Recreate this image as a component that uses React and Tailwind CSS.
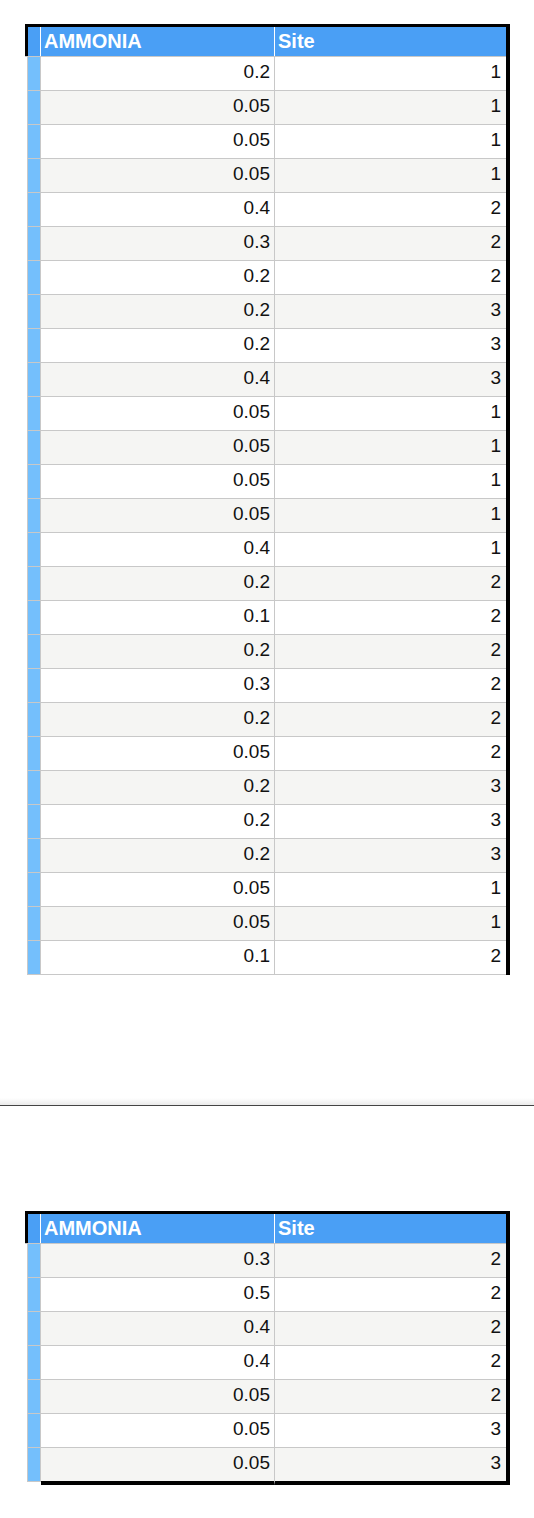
import React from "react";

const t1 = [
  ["0.2", "1"], ["0.05", "1"], ["0.05", "1"], ["0.05", "1"], ["0.4", "2"],
  ["0.3", "2"], ["0.2", "2"], ["0.2", "3"], ["0.2", "3"], ["0.4", "3"],
  ["0.05", "1"], ["0.05", "1"], ["0.05", "1"], ["0.05", "1"], ["0.4", "1"],
  ["0.2", "2"], ["0.1", "2"], ["0.2", "2"], ["0.3", "2"], ["0.2", "2"],
  ["0.05", "2"], ["0.2", "3"], ["0.2", "3"], ["0.2", "3"], ["0.05", "1"],
  ["0.05", "1"], ["0.1", "2"],
];

const t2 = [
  ["0.3", "2"], ["0.5", "2"], ["0.4", "2"], ["0.4", "2"], ["0.05", "2"],
  ["0.05", "3"], ["0.05", "3"],
];

function Table({ rows, startGray, closed }) {
  return (
    <div className="ml-[25px] w-[485px] border-t-[3px] border-r-[4px] border-black font-['Liberation_Sans',Arial,sans-serif] text-[19px] text-[#111]">
      <div className="flex h-[30px] border-b border-[#c8c8c8] bg-[#4a9ff5] text-white font-bold text-[20px]">
        <div className="w-[16px] shrink-0 border-l-[3px] border-r border-l-black border-r-white" />
        <div className="w-[234px] shrink-0 border-r border-white pl-[3px] pb-[2px] flex items-center leading-none">AMMONIA</div>
        <div className="flex-1 pl-[3px] pb-[2px] flex items-center leading-none">Site</div>
      </div>
      {rows.map((r, i) => {
        const gray = startGray ? i % 2 === 0 : i % 2 === 1;
        const bg = gray ? "bg-[#f5f5f3]" : "bg-white";
        const last = closed && i === rows.length - 1;
        const cellB = last ? "h-[37px] border-b-[4px] border-b-black" : "h-[34px] border-b border-b-[#c8c8c8]";
        return (
          <div key={i} className="flex items-start">
            <div className="w-[2px] shrink-0 h-[34px]" />
            <div className="w-[14px] shrink-0 h-[34px] bg-[#74bffc] border-l border-r border-b border-[#c8c8c8]" />
            <div className={`w-[234px] shrink-0 ${cellB} ${bg} border-r border-r-[#c8c8c8] flex items-center justify-end pr-[4px] pb-[4px] leading-none`}>
              {r[0]}
            </div>
            <div className={`flex-1 ${cellB} ${bg} flex items-center justify-end pr-[5px] pb-[4px] leading-none`}>
              {r[1]}
            </div>
          </div>
        );
      })}
    </div>
  );
}

export default function App() {
  return (
    <div className="w-[534px] min-h-[1518px] bg-white pt-[24px]">
      <Table rows={t1} startGray={false} closed={false} />
      <div className="mt-[123px] h-[8px] bg-gradient-to-b from-white to-[#ebebeb] border-b border-[#444]" />
      <div className="h-[105px]" />
      <Table rows={t2} startGray={true} closed={true} />
    </div>
  );
}
